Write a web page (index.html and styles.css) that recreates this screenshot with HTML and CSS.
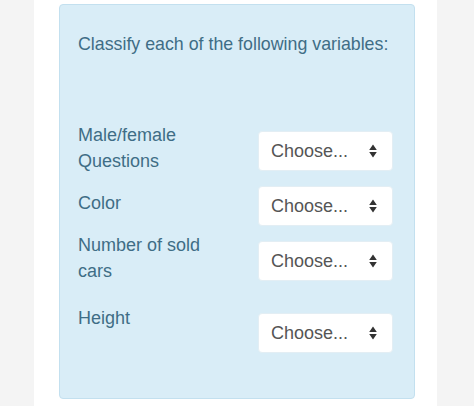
FILE: index.html
```html
<!DOCTYPE html>
<html>
<head>
<meta charset="utf-8">
<link rel="stylesheet" href="styles.css">
</head>
<body>
<div class="page">
  <div class="panel">
    <div class="title">Classify each of the following variables:</div>
    <div class="rows">
      <div class="row">
        <div class="label">Male/female<br>Questions</div>
        <div class="select"><span>Choose...</span><svg class="arrows" width="8" height="14" viewBox="0 0 8 14"><path d="M4 0.5 L7.8 6 L0.2 6 Z M4 13.5 L7.8 8 L0.2 8 Z" fill="#333"/></svg></div>
      </div>
      <div class="row">
        <div class="label">Color</div>
        <div class="select"><span>Choose...</span><svg class="arrows" width="8" height="14" viewBox="0 0 8 14"><path d="M4 0.5 L7.8 6 L0.2 6 Z M4 13.5 L7.8 8 L0.2 8 Z" fill="#333"/></svg></div>
      </div>
      <div class="row">
        <div class="label">Number of sold<br>cars</div>
        <div class="select"><span>Choose...</span><svg class="arrows" width="8" height="14" viewBox="0 0 8 14"><path d="M4 0.5 L7.8 6 L0.2 6 Z M4 13.5 L7.8 8 L0.2 8 Z" fill="#333"/></svg></div>
      </div>
      <div class="row row-top">
        <div class="label">Height</div>
        <div class="select"><span>Choose...</span><svg class="arrows" width="8" height="14" viewBox="0 0 8 14"><path d="M4 0.5 L7.8 6 L0.2 6 Z M4 13.5 L7.8 8 L0.2 8 Z" fill="#333"/></svg></div>
      </div>
    </div>
  </div>
</div>
</body>
</html>
```
FILE: styles.css
```css
html, body {
  margin: 0;
  padding: 0;
}
body {
  background: #f4f4f4;
  font-family: "Liberation Sans", Arial, sans-serif;
  width: 474px;
  height: 406px;
  overflow: hidden;
}
.page {
  margin-left: 34px;
  width: 403px;
  height: 406px;
  background: #ffffff;
  padding-top: 4px;
  box-sizing: border-box;
}
.panel {
  margin-left: 25px;
  width: 356px;
  height: 395px;
  box-sizing: border-box;
  background: #d9edf7;
  border: 1px solid #c3e0ef;
  border-radius: 4px;
  padding: 26px 21px 0 18px;
  color: #3f6d86;
}
.title {
  font-size: 17.8px;
  line-height: 26px;
}
.rows {
  margin-top: 65px;
  display: flex;
  flex-direction: column;
  gap: 6px;
}
.row {
  display: flex;
  align-items: center;
  justify-content: space-between;
}
.label {
  font-size: 18px;
  line-height: 26px;
}
.select {
  margin-top: 6px;
  width: 135px;
  height: 40px;
  box-sizing: border-box;
  background: #ffffff;
  border: 1px solid #e3eef4;
  border-radius: 4px;
  display: flex;
  align-items: center;
  justify-content: space-between;
  padding: 0 15px 0 12px;
  font-size: 18px;
  color: #555555;
}
.row-top {
  align-items: flex-start;
  margin-top: 15px;
}
.row-top .select {
  margin-top: 8px;
}
```
